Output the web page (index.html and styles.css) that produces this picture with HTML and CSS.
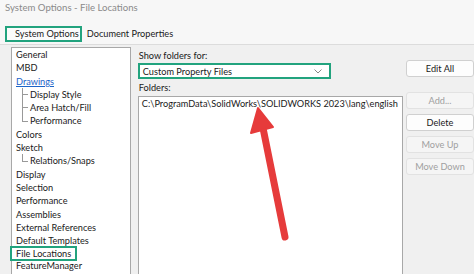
FILE: index.html
```html
<!DOCTYPE html>
<html lang="en">
<head>
  <meta charset="UTF-8" />
  <title>System Options - File Locations</title>
  <link rel="stylesheet" href="styles.css">
</head>
<body>
  <div class="window">
    <div class="title">System Options - File Locations</div>
    <div class="tabs">
      <div class="tab tab-active">System Options</div>
      <div class="tab">Document Properties</div>
    </div>
    <div class="content">
      <div class="tree">
        <div class="item">General</div>
        <div class="item">MBD</div>
        <div class="item link">Drawings</div>
        <div class="item child"><span class="branch"></span>Display Style</div>
        <div class="item child"><span class="branch"></span>Area Hatch/Fill</div>
        <div class="item child last"><span class="branch"></span>Performance</div>
        <div class="item">Colors</div>
        <div class="item">Sketch</div>
        <div class="item child last"><span class="branch"></span>Relations/Snaps</div>
        <div class="item">Display</div>
        <div class="item">Selection</div>
        <div class="item">Performance</div>
        <div class="item">Assemblies</div>
        <div class="item">External References</div>
        <div class="item">Default Templates</div>
        <div class="item"><span class="mark">File Locations</span></div>
        <div class="item">FeatureManager</div>
      </div>
      <div class="main">
        <div class="label">Show folders for:</div>
        <div class="select">
          <span>Custom Property Files</span>
          <svg class="chevron" width="8" height="5" viewBox="0 0 8 5"><path d="M0.5 0.5 L4 4 L7.5 0.5" fill="none" stroke="#888" stroke-width="1"/></svg>
        </div>
        <div class="label">Folders:</div>
        <div class="folders">
          <div class="path">C:\ProgramData\SolidWorks\SOLIDWORKS 2023\lang\english</div>
        </div>
      </div>
      <div class="side">
        <button class="btn">Edit All</button>
        <button class="btn btn-first" disabled>Add...</button>
        <button class="btn">Delete</button>
        <button class="btn" disabled>Move Up</button>
        <button class="btn" disabled>Move Down</button>
      </div>
    </div>
    <svg class="arrow" width="474" height="274" viewBox="0 0 474 274">
      <line x1="285" y1="237" x2="263" y2="128" stroke="#e63b3b" stroke-width="7" stroke-linecap="round"/>
      <polygon points="258,108 251,133 273,127" fill="#e63b3b" stroke="#e63b3b" stroke-width="2" stroke-linejoin="round"/>
    </svg>
  </div>
</body>
</html>
```

FILE: styles.css
```css
body {
  margin: 0;
  background: #f0f0f0;
  font-family: Lato, "Noto Sans", sans-serif;
  font-size: 9.2px;
  color: #1a1a1a;
  overflow: hidden;
}
.window {
  position: relative;
  width: 474px;
  height: 274px;
  overflow: hidden;
}
.title {
  background: #f7f7f7;
  color: #8a8a8a;
  font-size: 9.6px;
  height: 24px;
  line-height: 15px;
  padding-left: 5px;
}
.tabs {
  display: flex;
  align-items: center;
  background: #f7f7f7;
  height: 20px;
  border-bottom: 1px solid #dcdcdc;
  padding-left: 7px;
}
.tab {
  height: 12px;
  line-height: 12px;
  padding: 0 4px 0 3px;
}
.tab-active {
  padding: 0 1px 0 8px;
  background: #fbfbfb;
  outline: 2px solid #22a37e;
  margin-right: 4px;
}
.content {
  display: flex;
  margin-top: 2px;
}
.tree {
  margin-left: 11px;
  width: 118px;
  height: 240px;
  background: #ffffff;
  border: 1px solid #a8a8a8;
  padding-left: 4px;
  line-height: 13.3px;
}
.item {
  display: flex;
  white-space: nowrap;
}
.link {
  color: #1c64c8;
  text-decoration: underline;
}
.child {
  margin-left: 6px;
}
.branch {
  width: 6px;
  margin-right: 2px;
  background: linear-gradient(#999, #999) 0 0 / 1px 100% no-repeat,
              linear-gradient(#999, #999) 0 50% / 100% 1px no-repeat;
}
.last .branch {
  background: linear-gradient(#999, #999) 0 0 / 1px 50% no-repeat,
              linear-gradient(#999, #999) 0 50% / 100% 1px no-repeat;
}
.mark {
  display: inline-block;
  height: 11px;
  line-height: 11px;
  margin: 1px -4px 0 -4px;
  padding: 0 4px;
  outline: 2px solid #22a37e;
}
.main {
  margin-left: 7px;
  width: 275px;
  padding-top: 3px;
}
.label {
  height: 11px;
  line-height: 11px;
  padding-left: 1px;
}
.select {
  display: flex;
  align-items: center;
  justify-content: space-between;
  width: 179px;
  height: 12px;
  margin: 2px 0 3px 0;
  padding: 0 7px 0 3px;
  background: #ffffff;
  border: 2px solid #22a37e;
}
.chevron {
  display: block;
}
.folders {
  margin-top: 3px;
  height: 190px;
  background: #ffffff;
  border: 1px solid #a8a8a8;
  padding: 1px 3px;
}
.path {
  line-height: 12px;
}
.side {
  display: flex;
  flex-direction: column;
  margin-left: 3px;
  padding-top: 13px;
}
.btn {
  width: 68px;
  height: 17px;
  margin-bottom: 5px;
  padding: 0;
  font-family: inherit;
  font-size: 9.2px;
  color: #1a1a1a;
  background: #fdfdfd;
  border: 1px solid #d0d0d0;
  border-radius: 3px;
}
.btn:disabled {
  color: #a0a0a0;
  background: #f5f5f5;
  border-color: #e2e2e2;
}
.btn-first {
  margin-top: 10px;
}
.arrow {
  position: absolute;
  left: 0;
  top: 0;
}
```
